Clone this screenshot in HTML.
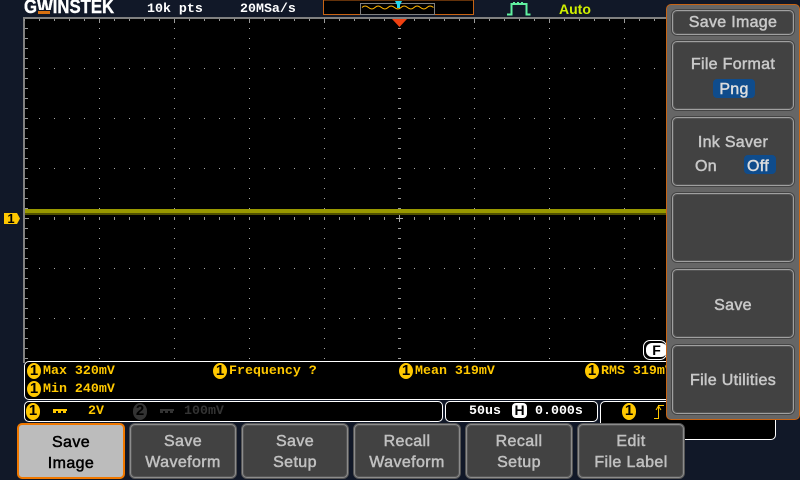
<!DOCTYPE html>
<html><head><meta charset="utf-8"><style>
html,body{margin:0;padding:0;background:#111828}
#s{position:relative;width:800px;height:480px;overflow:hidden;background:#111828;font-family:"Liberation Sans",sans-serif}
#s div,#s span{position:absolute;box-sizing:border-box;white-space:nowrap}
.m{font:bold 13.3px/14px "Liberation Mono",monospace;color:#ffc800}
.w{color:#fff}
.bd{width:14px;height:16px;border-radius:7px/8px;background:#ffc800;color:#000;font:bold 15px/16px "Liberation Sans",sans-serif;text-align:center}
.t{color:#c8c8c8;font:16px/18px "Liberation Sans",sans-serif;letter-spacing:.3px;-webkit-text-stroke:.5px currentColor;text-align:center}
.sb{left:672px;width:122px;height:69px;background:#424242;border:1px solid #a0a0a0;border-radius:5px;box-shadow:0 0 0 1px #444,inset 0 0 0 1px #555}
.bb{top:424px;width:106px;height:54px;background:#424242;border:1px solid #8c8c8c;border-radius:5px;box-shadow:0 0 0 1px #555,inset 0 0 0 1px #555;color:#c0c0c0;font:16px/21px "Liberation Sans",sans-serif;-webkit-text-stroke:.5px currentColor;text-align:center;padding-top:6px;letter-spacing:.4px;white-space:normal!important}
.box{background:#000;border:1px solid #fff;border-radius:5px}
.dc{height:4px;border-top:2px solid;background:repeating-linear-gradient(90deg,currentColor 0 3px,transparent 3px 5px)}
</style></head><body><div id="s">
<svg style="position:absolute;left:0;top:0" width="800" height="480">
<defs>
<pattern id="a" width="75" height="10" patternUnits="userSpaceOnUse" x="24" y="18"><rect x="0" y="0" width="1" height="1" fill="#aaa"/></pattern>
<pattern id="b" width="15" height="50" patternUnits="userSpaceOnUse" x="24" y="18"><rect x="0" y="0" width="1" height="1" fill="#aaa"/></pattern>
<pattern id="c" width="15" height="3" patternUnits="userSpaceOnUse" x="24" y="18"><rect x="0" y="0" width="1" height="3" fill="#999"/></pattern>
<pattern id="d" width="3" height="10" patternUnits="userSpaceOnUse" x="25" y="8"><rect x="0" y="0" width="3" height="1" fill="#999"/></pattern>
<pattern id="e" width="15" height="3" patternUnits="userSpaceOnUse" x="24" y="217"><rect x="0" y="0" width="1" height="3" fill="#999"/></pattern>
<pattern id="f" width="4" height="10" patternUnits="userSpaceOnUse" x="398" y="8"><rect x="0" y="0" width="3" height="1" fill="#999"/></pattern>
</defs>
<rect x="23" y="17" width="660" height="346" fill="#000"/>
<rect x="23" y="17" width="660" height="2" fill="#808080"/>
<rect x="23" y="17" width="2" height="346" fill="#808080"/>
<rect x="99" y="28" width="1" height="334" fill="url(#a)"/>
<rect x="174" y="28" width="1" height="334" fill="url(#a)"/>
<rect x="249" y="28" width="1" height="334" fill="url(#a)"/>
<rect x="324" y="28" width="1" height="334" fill="url(#a)"/>
<rect x="474" y="28" width="1" height="334" fill="url(#a)"/>
<rect x="549" y="28" width="1" height="334" fill="url(#a)"/>
<rect x="624" y="28" width="1" height="334" fill="url(#a)"/>
<rect x="39" y="68" width="630" height="1" fill="url(#b)"/>
<rect x="39" y="118" width="630" height="1" fill="url(#b)"/>
<rect x="39" y="168" width="630" height="1" fill="url(#b)"/>
<rect x="39" y="268" width="630" height="1" fill="url(#b)"/>
<rect x="39" y="318" width="630" height="1" fill="url(#b)"/>
<rect x="24" y="19" width="645" height="2" fill="url(#c)"/>
<path d="M99 19v4M174 19v4M249 19v4M324 19v4M399 19v4M474 19v4M549 19v4M624 19v4" stroke="#999" stroke-width="1" transform="translate(.5,0)"/>
<rect x="25" y="28" width="3" height="334" fill="url(#d)"/>
<rect x="39" y="217" width="630" height="3" fill="url(#e)"/>
<rect x="398" y="28" width="3" height="334" fill="url(#f)"/>
<rect x="25" y="218" width="4" height="1" fill="#999"/>
<path d="M396 218.500h7M399.500 215v7" stroke="#aaa" stroke-width="1"/>
<rect x="25" y="209" width="642" height="4" fill="#989800"/>
<rect x="25" y="213" width="642" height="2" fill="#505000"/>
<path d="M4 213h13l3 5.500l-3 5.500H4z" fill="#ffc800"/>
<path d="M392 19h15l-7.500 8z" fill="#f04010"/>
<rect x="323.500" y="0" width="150" height="14.500" fill="#000" stroke="#c86414"/>
<rect x="360.500" y="3.500" width="74" height="11" fill="#000" stroke="#808080"/>
<path d="M362 7.500q3-3 6.500 0t6.500 0t6.500 0t6.500 0t6.500 0t6.500 0t6.500 0t6.500 0t6.500 0t6.500 0t6.500 0" fill="none" stroke="#ffb400" stroke-width="1"/>
<path d="M395 1h7l-2 4v3h-3V5z" fill="#20d8f0"/>
<path d="M507 14.500h4.500V4h15v10.500h4" fill="none" stroke="#60f0a0" stroke-width="2"/>
<path d="M513 3h2M517 3h2M521 3h2" stroke="#60f0a0" stroke-width="2"/>
</svg>

<div style="left:24px;top:-2px;font:bold 19px/19px 'Liberation Sans',sans-serif;color:#fff;-webkit-text-stroke:.4px #fff;transform:scaleX(.88);transform-origin:0 0">GWINSTEK</div>
<div style="left:37px;top:10px;width:14px;height:5px;background:#111828"></div>
<div style="left:38px;top:11px;width:12px;height:3px;background:#d87010"></div>
<div class="m w" style="left:147px;top:2px">10k pts</div>
<div class="m w" style="left:240px;top:2px">20MSa/s</div>
<div style="left:559px;top:1px;font:bold 14px/16px 'Liberation Sans',sans-serif;color:#d0f000">Auto</div>
<div style="left:5px;top:212px;width:12px;font:bold 13px/13px 'Liberation Sans',sans-serif;color:#000;text-align:center">1</div>

<div class="box" style="left:24px;top:361px;width:650px;height:39px"></div>
<div class="bd" style="left:27px;top:363px">1</div><div class="m" style="left:43px;top:364px">Max 320mV</div>
<div class="bd" style="left:213px;top:363px">1</div><div class="m" style="left:229px;top:364px">Frequency ?</div>
<div class="bd" style="left:399px;top:363px">1</div><div class="m" style="left:415px;top:364px">Mean 319mV</div>
<div class="bd" style="left:585px;top:363px">1</div><div class="m" style="left:601px;top:364px">RMS 319mV</div>
<div class="bd" style="left:27px;top:381px">1</div><div class="m" style="left:43px;top:382px">Min 240mV</div>

<div class="box" style="left:24px;top:401px;width:419px;height:21px"></div>
<div class="bd" style="left:26px;top:403px;height:17px">1</div>
<div class="dc" style="left:53px;top:409px;width:14px;color:#ffc800"></div>
<div class="m" style="left:88px;top:404px">2V</div>
<div class="bd" style="left:133px;top:403px;height:17px;background:#333">2</div>
<div class="dc" style="left:160px;top:409px;width:14px;color:#333"></div>
<div class="m" style="left:184px;top:404px;color:#333">100mV</div>
<div class="box" style="left:445px;top:401px;width:153px;height:21px"></div>
<div class="m w" style="left:469px;top:404px">50us</div>
<div style="left:512px;top:403px;width:15px;height:15px;background:#fff;border-radius:4px;color:#000;font:bold 14px/15px 'Liberation Sans',sans-serif;text-align:center">H</div>
<div class="m w" style="left:535px;top:404px">0.000s</div>
<div class="box" style="left:600px;top:401px;width:176px;height:39px"></div>
<div class="bd" style="left:622px;top:403px;height:17px">1</div>
<svg style="position:absolute;left:654px;top:404px" width="12" height="16"><path d="M0 14.500h4.500V1.500H10M2 6l2.500-4L7 6" fill="none" stroke="#ffc800"/></svg>

<div style="left:643px;top:340px;width:24px;height:20px;background:#000;border:1px solid #fff;border-radius:7px"></div>
<div style="left:646px;top:343px;width:21px;height:14px;background:#fff;border-radius:6px;color:#000;font:bold 14px/14px 'Liberation Sans',sans-serif;text-align:center">F</div>

<div style="left:666px;top:4px;width:134px;height:416px;background:#666;border:1px solid #c86414;border-radius:5px"></div>
<div class="sb" style="top:10px;height:25px"></div>
<div class="t" style="left:671px;width:124px;top:14px">Save Image</div>
<div class="sb" style="top:41px"></div>
<div class="t" style="left:671px;width:124px;top:56px">File Format</div>
<div style="left:713px;top:79px;width:42px;height:19px;background:#0f4c8c;border-radius:4px"></div>
<div class="t" style="left:713px;width:42px;top:81px;color:#ddd">Png</div>
<div class="sb" style="top:117px"></div>
<div class="t" style="left:671px;width:124px;top:134px">Ink Saver</div>
<div class="t" style="left:695px;top:158px">On</div>
<div style="left:744px;top:155px;width:32px;height:19px;background:#0f4c8c;border-radius:4px"></div>
<div class="t" style="left:742px;width:32px;top:158px;color:#ddd">Off</div>
<div class="sb" style="top:193px"></div>
<div class="sb" style="top:269px"></div>
<div class="t" style="left:671px;width:124px;top:297px">Save</div>
<div class="sb" style="top:345px"></div>
<div class="t" style="left:671px;width:124px;top:372px">File Utilities</div>

<div class="bb" style="left:17px;top:423px;width:108px;height:56px;background:#bcbcbc;border:2px solid #f07800;box-shadow:none;color:#000;padding-top:7px">Save<br>Image</div>
<div class="bb" style="left:130px">Save<br>Waveform</div>
<div class="bb" style="left:242px">Save<br>Setup</div>
<div class="bb" style="left:354px">Recall<br>Waveform</div>
<div class="bb" style="left:466px">Recall<br>Setup</div>
<div class="bb" style="left:578px">Edit<br>File Label</div>
</div></body></html>
